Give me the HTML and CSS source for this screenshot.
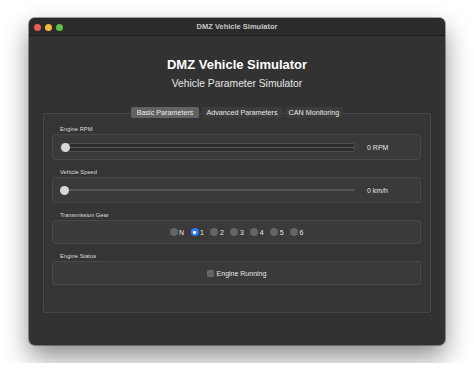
FILE: index.html
```html
<!DOCTYPE html>
<html lang="en">
<head>
  <meta charset="UTF-8" />
  <title>DMZ Vehicle Simulator</title>
  <link rel="stylesheet" href="styles.css">
</head>
<body>
<div class="window">
  <div class="titlebar">
    <div class="lights">
      <span class="light red"></span>
      <span class="light yellow"></span>
      <span class="light green"></span>
    </div>
    <div class="title">DMZ Vehicle Simulator</div>
  </div>
  <div class="content">
    <h1>DMZ Vehicle Simulator</h1>
    <p class="subtitle">Vehicle Parameter Simulator</p>

    <div class="tabs">
      <span class="tab active">Basic Parameters</span>
      <span class="tab">Advanced Parameters</span>
      <span class="tab">CAN Monitoring</span>
    </div>

    <div class="pane">
      <div class="group">
        <div class="group-label">Engine RPM</div>
        <div class="group-box slider-row">
          <div class="slider focused"><span class="knob"></span></div>
          <div class="value">0 RPM</div>
        </div>
      </div>

      <div class="group">
        <div class="group-label">Vehicle Speed</div>
        <div class="group-box slider-row">
          <div class="slider"><span class="knob"></span></div>
          <div class="value">0 km/h</div>
        </div>
      </div>

      <div class="group">
        <div class="group-label">Transmission Gear</div>
        <div class="group-box gears short">
          <label class="radio"><span class="dot"></span>N</label>
          <label class="radio"><span class="dot on"></span>1</label>
          <label class="radio"><span class="dot"></span>2</label>
          <label class="radio"><span class="dot"></span>3</label>
          <label class="radio"><span class="dot"></span>4</label>
          <label class="radio"><span class="dot"></span>5</label>
          <label class="radio"><span class="dot"></span>6</label>
        </div>
      </div>

      <div class="group">
        <div class="group-label">Engine Status</div>
        <div class="group-box status short">
          <label class="check"><span class="box"></span>Engine Running</label>
        </div>
      </div>
    </div>
  </div>
</div>
</body>
</html>
```

FILE: styles.css
```css
body {
  margin: 0;
  padding: 18px 29px;
  background: #ffffff;
  font-family: "Liberation Sans", Arial, sans-serif;
}
.window {
  width: 416px;
  height: 327px;
  background: #323232;
  border-radius: 6px;
  overflow: hidden;
  box-shadow: 0 12px 26px rgba(0,0,0,0.45), 0 0 0 1px rgba(0,0,0,0.35);
}
.titlebar {
  height: 17px;
  background: #2b2b2b;
  border-bottom: 1px solid #1c1c1c;
  position: relative;
  display: flex;
  align-items: center;
  justify-content: center;
}
.lights {
  position: absolute;
  left: 5px;
  top: 6px;
  display: flex;
  gap: 4px;
}
.light {
  width: 7px;
  height: 7px;
  border-radius: 50%;
}
.red { background: #ee5d55; }
.yellow { background: #f2bc3d; }
.green { background: #5cc146; }
.title {
  color: #c9c9c9;
  font-size: 7.5px;
  font-weight: bold;
}
.content {
  padding: 0 14px;
}
h1 {
  margin: 0;
  padding-top: 20px;
  text-align: center;
  color: #ffffff;
  font-size: 13px;
  font-weight: bold;
  line-height: 17px;
}
.subtitle {
  margin: 0;
  padding-top: 5px;
  text-align: center;
  color: #e6e6e6;
  font-size: 10.3px;
  line-height: 11px;
}
.tabs {
  margin-top: 18px;
  display: flex;
  justify-content: center;
  gap: 3px;
  position: relative;
  z-index: 1;
}
.tab {
  font-size: 7.2px;
  color: #e8e8e8;
  background: #3c3c3c;
  padding: 1px 4px;
  line-height: 9px;
  border-radius: 2px;
}
.tab.active {
  background: #626262;
  padding: 1px 6px;
}
.pane {
  margin-top: -5px;
  border: 1px solid #474747;
  border-radius: 2px;
  background: #353535;
  height: 200px;
  box-sizing: border-box;
  padding: 12px 9px 0 8px;
  display: flex;
  flex-direction: column;
  gap: 9px;
}
.group-label {
  font-size: 5.8px;
  color: #dcdcdc;
  line-height: 7px;
  padding-left: 8px;
  margin-bottom: 1px;
}
.group-box {
  height: 26px;
  box-sizing: border-box;
  background: #3a3a3a;
  border: 1px solid #484848;
  border-radius: 3px;
}
.group-box.short {
  height: 24px;
}
.slider-row {
  display: flex;
  align-items: center;
  padding: 0 8px 0 7px;
}
.slider {
  position: relative;
  width: 295px;
  height: 2px;
  background: #555555;
  border-radius: 1px;
}
.slider.focused {
  height: 9px;
  background: #2c2c2c;
  border: 1px solid #4e4e4e;
  border-radius: 2px;
  box-sizing: border-box;
}
.slider.focused::after {
  content: "";
  position: absolute;
  left: 0;
  right: 0;
  top: 3px;
  height: 1px;
  background: #5a5a5a;
}
.knob {
  position: absolute;
  left: 0;
  top: 50%;
  width: 9px;
  height: 9px;
  margin-top: -4.5px;
  border-radius: 50%;
  background: #d9d9d9;
  z-index: 1;
}
.value {
  margin-left: 12px;
  font-size: 7px;
  color: #e6e6e6;
}
.gears {
  display: flex;
  align-items: center;
  justify-content: center;
  gap: 6.5px;
}
.radio {
  display: flex;
  align-items: center;
  gap: 1.5px;
  font-size: 7px;
  color: #e6e6e6;
}
.dot {
  width: 8px;
  height: 8px;
  border-radius: 50%;
  background: #646464;
  position: relative;
}
.dot.on {
  background: #2f7bf0;
}
.dot.on::after {
  content: "";
  position: absolute;
  left: 2.5px;
  top: 2.5px;
  width: 3px;
  height: 3px;
  background: #ffffff;
  border-radius: 1px;
}
.status {
  display: flex;
  align-items: center;
  justify-content: center;
}
.check {
  display: flex;
  align-items: center;
  gap: 3px;
  font-size: 7px;
  color: #e6e6e6;
}
.box {
  width: 7px;
  height: 7px;
  background: #646464;
  border-radius: 1.5px;
}
```
